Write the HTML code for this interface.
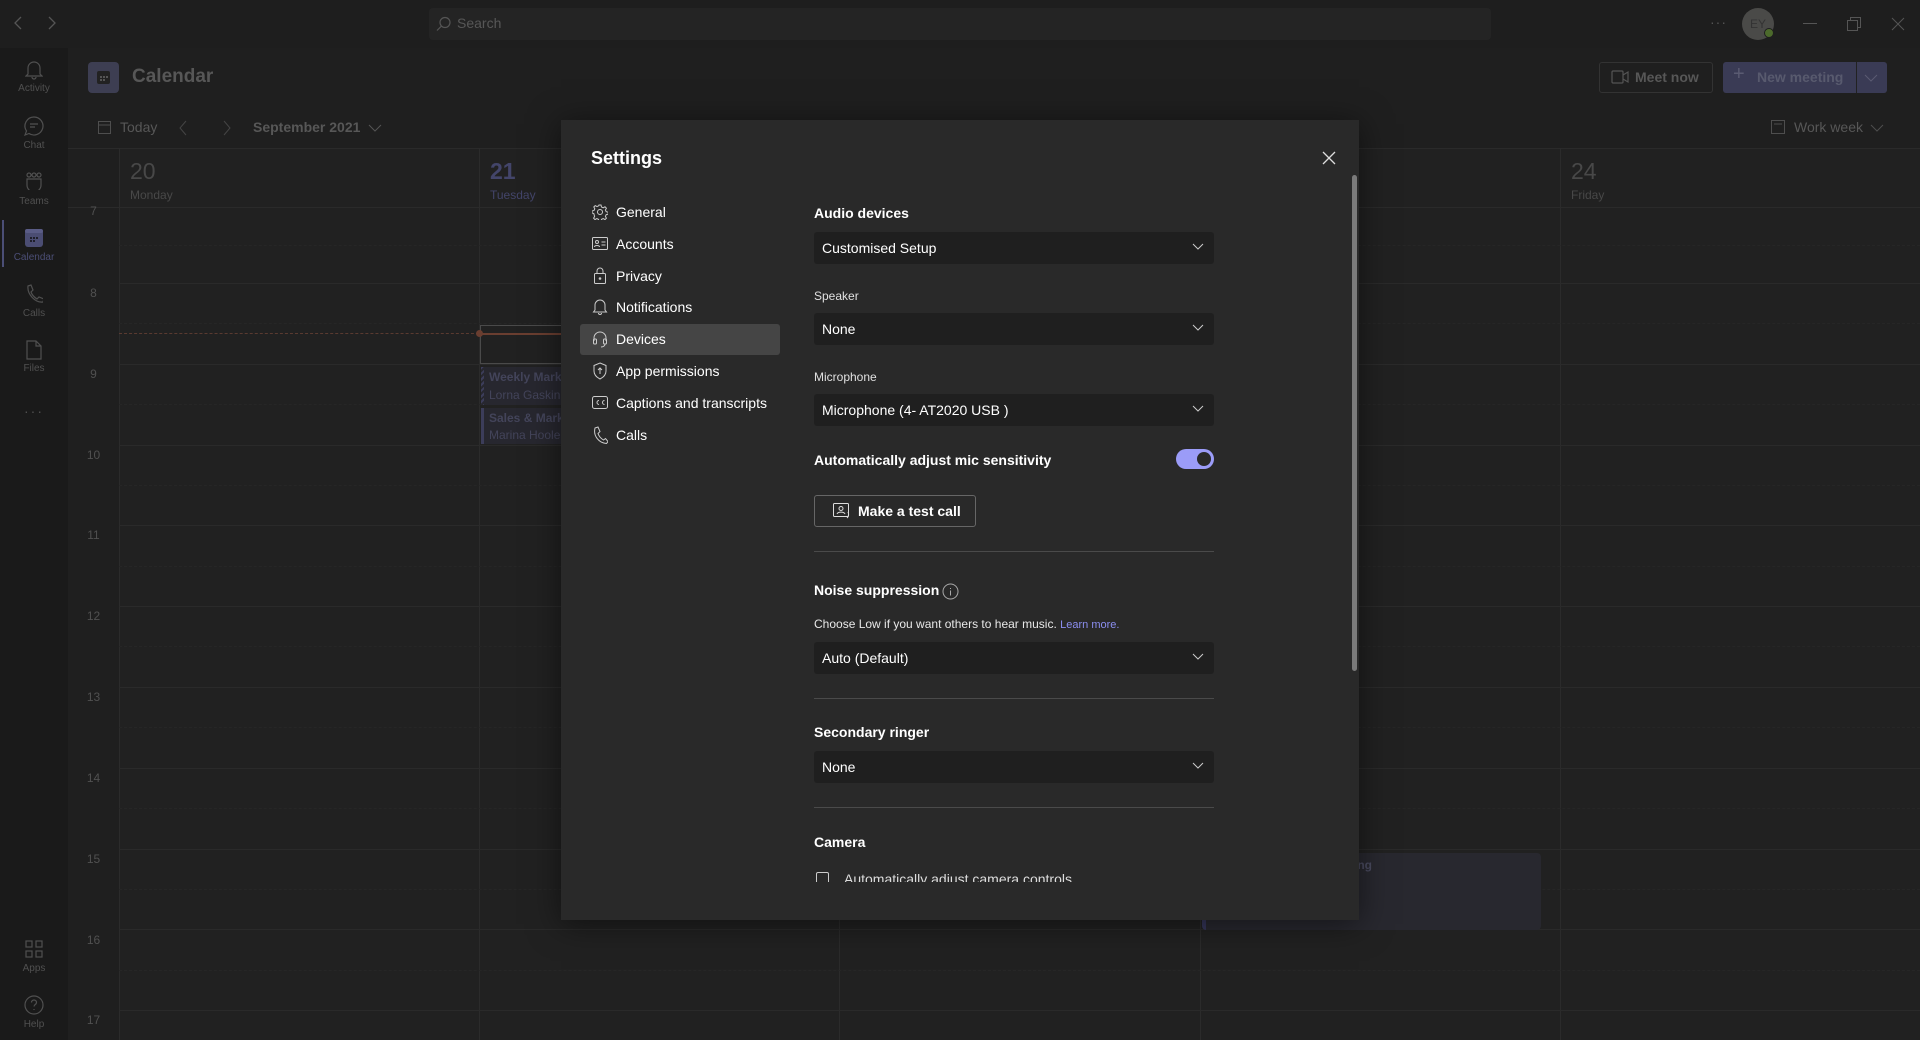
<!DOCTYPE html>
<html><head><meta charset="utf-8"><style>
*{box-sizing:border-box;margin:0;padding:0}
body{width:1920px;height:1040px;background:#1f1f1f;font-family:"Liberation Sans",sans-serif;position:relative;overflow:hidden;color:#fff}
.a{position:absolute}
.dim{color:#575757}
.rl{position:absolute;left:0;width:68px;text-align:center;font-size:10px;color:#505050}
.hl{position:absolute;left:119px;width:1801px;height:1px;background:#2a2a2a}
.hh{position:absolute;left:119px;width:1801px;border-top:1px dashed #262626}
.vl{position:absolute;top:148px;width:1px;height:892px;background:#2b2b2b}
.hr{position:absolute;left:68px;width:51px;text-align:center;font-size:12px;color:#505050}
.nav{position:absolute;left:616px;font-size:14px;color:#fff}
.ni{position:absolute;left:592px}
.dd{position:absolute;left:814px;width:400px;height:32px;background:#1f1f1f;border-radius:3px;font-size:14px;line-height:32px;padding-left:8px;color:#fff}
.dd svg{position:absolute;right:10px;top:11px}
.lb{position:absolute;left:814px;font-size:12px;color:#e0e0e0}
.h{position:absolute;left:814px;font-size:14px;font-weight:bold;color:#fff}
.dv{position:absolute;left:814px;width:400px;height:1px;background:#4a4a4a}
</style></head><body>
<div class="a" style="left:0;top:0;width:1920px;height:48px;background:#1e1e1e"></div>
<svg class="a" style="left:12px;top:15px" width="46" height="16" fill="none" stroke="#555" stroke-width="1.3"><path d="M9 2L3 8l6 6M37 2l6 6-6 6"/></svg>
<div class="a" style="left:429px;top:8px;width:1062px;height:32px;background:#242424;border-radius:4px"></div>
<svg class="a" style="left:436px;top:16px" width="16" height="16" fill="none" stroke="#555" stroke-width="1.2"><circle cx="9" cy="6.5" r="5"/><path d="M5.5 10L1 14.5"/></svg>
<div class="a dim" style="left:457px;top:15px;font-size:14px">Search</div>
<div class="a" style="left:1710px;top:14px;font-size:14px;color:#555;letter-spacing:1px">···</div>
<div class="a" style="left:1742px;top:8px;width:32px;height:32px;border-radius:50%;background:#4a4a48;color:#333;font-size:12px;text-align:center;line-height:32px">EY</div>
<div class="a" style="left:1764px;top:28px;width:10px;height:10px;border-radius:50%;background:#4c6a2c;border:1px solid #1e1e1e"></div>
<div class="a" style="left:1803px;top:23px;width:14px;height:1px;background:#555"></div>
<svg class="a" style="left:1846px;top:16px" width="16" height="16" fill="none" stroke="#555"><rect x="1.5" y="4.5" width="10" height="10"/><path d="M4.5 4.5V1.5h10v10h-3"/></svg>
<svg class="a" style="left:1891px;top:17px" width="14" height="14" stroke="#555"><path d="M1 1l12 12M13 1L1 13"/></svg>
<div class="a" style="left:0;top:48px;width:68px;height:992px;background:#1a1a1a"></div>
<svg class="a" style="left:25px;top:60px" width="18" height="20" fill="none" stroke="#505050" stroke-width="1.2"><path d="M3 14V8a6 6 0 0112 0v6l2 2H1zM7 17a2 2 0 004 0"/></svg>
<div class="rl" style="top:83px">Activity</div>
<svg class="a" style="left:24px;top:116px" width="20" height="20" fill="none" stroke="#505050" stroke-width="1.2"><path d="M10 1a9 9 0 11-5 16.5L1 19l1.5-4A9 9 0 0110 1zM6 8h8M6 11h5"/></svg>
<div class="rl" style="top:140px">Chat</div>
<svg class="a" style="left:24px;top:172px" width="20" height="18" fill="none" stroke="#505050" stroke-width="1.2"><circle cx="5" cy="3" r="2"/><circle cx="10" cy="3" r="2"/><circle cx="15" cy="3" r="2"/><path d="M3 7h14v6a5 5 0 01-14 0z"/></svg>
<div class="rl" style="top:196px">Teams</div>
<div class="a" style="left:2px;top:220px;width:2px;height:47px;background:#4b4e76"></div>
<svg class="a" style="left:25px;top:229px" width="18" height="18"><rect width="18" height="18" rx="3" fill="#4b4d73"/><rect y="0" width="18" height="4" rx="2" fill="#5a5c86"/><g fill="#1f1f2a"><rect x="5" y="8" width="2" height="2"/><rect x="8" y="8" width="2" height="2"/><rect x="11" y="8" width="2" height="2"/><rect x="5" y="11" width="2" height="2"/><rect x="8" y="11" width="2" height="2"/></g></svg>
<div class="rl" style="top:252px;color:#4b4e76">Calendar</div>
<svg class="a" style="left:25px;top:284px" width="18" height="20" fill="none" stroke="#505050" stroke-width="1.2"><path d="M3 2l3-1 2 5-2 2c1 3 3 5 6 7l2-2 5 2-1 3c-8 1-16-8-15-16z"/></svg>
<div class="rl" style="top:308px">Calls</div>
<svg class="a" style="left:26px;top:340px" width="16" height="20" fill="none" stroke="#505050" stroke-width="1.2"><path d="M1 1h9l5 5v13H1zM10 1v5h5"/></svg>
<div class="rl" style="top:363px">Files</div>
<div class="rl" style="top:403px;font-size:14px;letter-spacing:2px">···</div>
<svg class="a" style="left:25px;top:940px" width="18" height="18" fill="none" stroke="#505050" stroke-width="1.2"><rect x="1" y="1" width="6" height="6"/><rect x="11" y="1" width="6" height="6"/><rect x="1" y="11" width="6" height="6"/><rect x="11" y="11" width="6" height="6"/></svg>
<div class="rl" style="top:963px">Apps</div>
<svg class="a" style="left:24px;top:995px" width="20" height="20" fill="none" stroke="#505050" stroke-width="1.2"><circle cx="10" cy="10" r="9"/><path d="M7.5 7.5a2.5 2.5 0 115 0c0 2-2.5 2-2.5 4M10 14v1"/></svg>
<div class="rl" style="top:1019px">Help</div>
<div class="a" style="left:88px;top:62px;width:31px;height:31px;border-radius:4px;background:#3d3e52"></div>
<svg class="a" style="left:97px;top:71px" width="13" height="13"><rect width="13" height="13" rx="2" fill="#222"/><g fill="#555"><rect x="3" y="5" width="2" height="2"/><rect x="6" y="5" width="2" height="2"/><rect x="9" y="5" width="2" height="2"/><rect x="3" y="8" width="2" height="2"/><rect x="6" y="8" width="2" height="2"/></g></svg>
<div class="a" style="left:132px;top:66px;font-size:19px;font-weight:bold;color:#575757">Calendar</div>
<div class="a" style="left:1599px;top:62px;width:114px;height:31px;border:1px solid #333;border-radius:3px"></div>
<svg class="a" style="left:1611px;top:70px" width="18" height="14" fill="none" stroke="#555" stroke-width="1.2"><rect x="1" y="1" width="11" height="12" rx="1"/><path d="M12 5l5-3v10l-5-3"/></svg>
<div class="a" style="left:1635px;top:69px;font-size:14px;font-weight:bold;color:#575757">Meet now</div>
<div class="a" style="left:1723px;top:62px;width:164px;height:31px;background:#3a3b55;border-radius:3px"></div>
<div class="a" style="left:1856px;top:62px;width:1px;height:31px;background:#222"></div>
<div class="a" style="left:1733px;top:63px;font-size:20px;color:#5a5b72">+</div>
<div class="a" style="left:1757px;top:69px;font-size:14px;font-weight:bold;color:#585a6e">New meeting</div>
<svg class="a" style="left:1864px;top:74px" width="14" height="8" fill="none" stroke="#5a5b72"><path d="M1 1l6 6 6-6"/></svg>
<svg class="a" style="left:98px;top:121px" width="13" height="13" fill="none" stroke="#4e4e4e"><rect x=".5" y=".5" width="12" height="12"/><path d="M.5 4h12"/></svg>
<div class="a dim" style="left:120px;top:119px;font-size:14px">Today</div>
<svg class="a" style="left:178px;top:120px" width="60" height="16" fill="none" stroke="#444"><path d="M8 1L2 8l6 7M46 1l6 7-6 7"/></svg>
<div class="a" style="left:253px;top:119px;font-size:14px;font-weight:bold;color:#575757">September 2021</div>
<svg class="a" style="left:368px;top:124px" width="14" height="8" fill="none" stroke="#555"><path d="M1 1l6 6 6-6"/></svg>
<svg class="a" style="left:1771px;top:120px" width="14" height="14" fill="none" stroke="#4e4e4e"><rect x=".5" y=".5" width="13" height="13"/><path d="M3 4h8"/></svg>
<div class="a dim" style="left:1794px;top:119px;font-size:14px">Work week</div>
<svg class="a" style="left:1870px;top:124px" width="14" height="8" fill="none" stroke="#4e4e4e"><path d="M1 1l6 6 6-6"/></svg>
<div class="a" style="left:119px;top:148px;width:1801px;height:892px;background:#212121"></div>
<div class="a" style="left:68px;top:148px;width:1852px;height:1px;background:#2a2a2a"></div>
<div class="a" style="left:68px;top:207px;width:1852px;height:1px;background:#2a2a2a"></div>
<div class="vl" style="left:119px"></div><div class="vl" style="left:479px"></div><div class="vl" style="left:839px"></div><div class="vl" style="left:1200px"></div><div class="vl" style="left:1560px"></div>
<div class="a" style="left:130px;top:158px;font-size:23px;color:#484848">20</div>
<div class="a" style="left:130px;top:188px;font-size:12px;color:#484848">Monday</div>
<div class="a" style="left:490px;top:158px;font-size:23px;font-weight:bold;color:#43456a">21</div>
<div class="a" style="left:490px;top:188px;font-size:12px;color:#43456a">Tuesday</div>
<div class="a" style="left:1571px;top:158px;font-size:23px;color:#484848">24</div>
<div class="a" style="left:1571px;top:188px;font-size:12px;color:#484848">Friday</div>
<div class="hh" style="top:245px"></div>
<div class="hl" style="top:283px"></div><div class="hh" style="top:323px"></div>
<div class="hl" style="top:364px"></div><div class="hh" style="top:404px"></div>
<div class="hl" style="top:445px"></div><div class="hh" style="top:485px"></div>
<div class="hl" style="top:525px"></div><div class="hh" style="top:566px"></div>
<div class="hl" style="top:606px"></div><div class="hh" style="top:646px"></div>
<div class="hl" style="top:687px"></div><div class="hh" style="top:727px"></div>
<div class="hl" style="top:768px"></div><div class="hh" style="top:808px"></div>
<div class="hl" style="top:849px"></div><div class="hh" style="top:889px"></div>
<div class="hl" style="top:929px"></div><div class="hh" style="top:970px"></div>
<div class="hl" style="top:1010px"></div>
<div class="hr" style="top:204px">7</div><div class="hr" style="top:286px">8</div><div class="hr" style="top:367px">9</div><div class="hr" style="top:448px">10</div><div class="hr" style="top:528px">11</div><div class="hr" style="top:609px">12</div><div class="hr" style="top:690px">13</div><div class="hr" style="top:771px">14</div><div class="hr" style="top:852px">15</div><div class="hr" style="top:933px">16</div><div class="hr" style="top:1013px">17</div>
<div class="a" style="left:119px;top:333px;width:360px;border-top:1px dashed #5a3a30"></div>
<div class="a" style="left:480px;top:325px;width:81px;height:39px;border:1px solid #4a4a4a;border-right:none"></div>
<div class="a" style="left:480px;top:333px;width:81px;height:2px;background:#6a3e30"></div>
<div class="a" style="left:476px;top:330px;width:7px;height:7px;border-radius:50%;background:#6a3e30"></div>
<div class="a" style="left:481px;top:367px;width:80px;height:38px;background:#27272f"></div>
<div class="a" style="left:481px;top:367px;width:3px;height:38px;background:repeating-linear-gradient(135deg,#3c3d5a 0 2px,#27272f 2px 4px)"></div>
<div class="a" style="left:489px;top:370px;font-size:12px;font-weight:bold;color:#43445a;white-space:nowrap;width:72px;overflow:hidden">Weekly Mark</div>
<div class="a" style="left:489px;top:388px;font-size:12px;color:#43445a;white-space:nowrap;width:72px;overflow:hidden">Lorna Gaskin</div>
<div class="a" style="left:481px;top:408px;width:80px;height:36px;background:#27272f;border-left:3px solid #3c3d5a"></div>
<div class="a" style="left:489px;top:411px;font-size:12px;font-weight:bold;color:#43445a;white-space:nowrap;width:72px;overflow:hidden">Sales &amp; Mark</div>
<div class="a" style="left:489px;top:428px;font-size:12px;color:#43445a;white-space:nowrap;width:72px;overflow:hidden">Marina Hoole</div>
<div class="a" style="left:1202px;top:853px;width:339px;height:77px;background:#28282f;border-radius:4px;border-left:4px solid #35365a"></div>
<div class="a" style="left:1350px;top:858px;font-size:12px;font-weight:bold;color:#4a4b60">ting</div>
<div class="a" style="left:561px;top:120px;width:798px;height:800px;background:#292929;box-shadow:0 4px 30px rgba(0,0,0,.5)"></div>
<div class="a" style="left:591px;top:148px;font-size:18px;font-weight:bold">Settings</div>
<svg class="a" style="left:1322px;top:151px" width="14" height="14" stroke="#ddd" stroke-width="1.3"><path d="M1 1l12 12M13 1L1 13"/></svg>
<div class="a" style="left:1352px;top:175px;width:5px;height:496px;background:#7a7a7a;border-radius:3px"></div>
<div class="a" style="left:580px;top:324px;width:200px;height:31px;background:#454545;border-radius:3px"></div>
<svg class="ni" style="top:204px" width="16" height="16" fill="none" stroke="#ccc" stroke-width="1"><circle cx="8" cy="8" r="2.5"/><path d="M7 1h2l.5 2 1.7.8 1.8-1 1.4 1.4-1 1.8.8 1.7 2 .5v2l-2 .5-.8 1.7 1 1.8-1.4 1.4-1.8-1-1.7.8-.5 2H7l-.5-2-1.7-.8-1.8 1-1.4-1.4 1-1.8L1.8 9.5 0 9V7l2-.5.8-1.7-1-1.8 1.4-1.4 1.8 1 1.7-.8z"/></svg>
<div class="nav" style="top:204px">General</div>
<svg class="ni" style="top:237px" width="16" height="14" fill="none" stroke="#ccc"><rect x=".5" y=".5" width="15" height="12" rx="1"/><circle cx="5" cy="5" r="1.5"/><path d="M2.5 10c0-2 5-2 5 0M9.5 5h4M9.5 8h4"/></svg>
<div class="nav" style="top:236px">Accounts</div>
<svg class="ni" style="top:266px" width="16" height="18" fill="none" stroke="#ccc"><rect x="2.5" y="7.5" width="11" height="10" rx="1"/><path d="M5 7.5V5a3 3 0 016 0v2.5"/><circle cx="8" cy="12.5" r=".8" fill="#ccc"/></svg>
<div class="nav" style="top:268px">Privacy</div>
<svg class="ni" style="top:298px" width="16" height="18" fill="none" stroke="#ccc"><path d="M3 12V7a5 5 0 0110 0v5l1.5 2h-13zM6.5 15a1.5 1.5 0 003 0"/></svg>
<div class="nav" style="top:299px">Notifications</div>
<svg class="ni" style="top:330px" width="16" height="18" fill="none" stroke="#ccc"><path d="M2 11V8a6 6 0 0112 0v3"/><rect x="1.5" y="9" width="3" height="5" rx="1"/><rect x="11.5" y="9" width="3" height="5" rx="1"/><path d="M13 14c0 2-2 3-4 3"/></svg>
<div class="nav" style="top:331px">Devices</div>
<svg class="ni" style="top:362px" width="16" height="18" fill="none" stroke="#ccc"><path d="M8 1l6 2.5V9c0 4-3 6.5-6 8-3-1.5-6-4-6-8V3.5z"/><path d="M8 12V6M6 8l2-2 2 2"/></svg>
<div class="nav" style="top:363px">App permissions</div>
<svg class="ni" style="top:396px" width="16" height="13" fill="none" stroke="#ccc"><rect x=".5" y=".5" width="15" height="12" rx="2"/><path d="M7 4.5a2 2 0 100 4M12.5 4.5a2 2 0 100 4"/></svg>
<div class="nav" style="top:395px">Captions and transcripts</div>
<svg class="ni" style="top:426px" width="16" height="18" fill="none" stroke="#ccc"><path d="M3 2l3-1 2 4.5-2 2c1 3 3 5 5.5 6.5l2-1.5 2.5 3-1.5 2C7 17 1 10 3 2z"/></svg>
<div class="nav" style="top:427px">Calls</div>
<div class="h" style="top:205px">Audio devices</div>
<div class="dd" style="top:232px">Customised Setup<svg width="12" height="7" fill="none" stroke="#ccc"><path d="M1 1l5 5 5-5"/></svg></div>
<div class="lb" style="top:289px">Speaker</div>
<div class="dd" style="top:313px">None<svg width="12" height="7" fill="none" stroke="#ccc"><path d="M1 1l5 5 5-5"/></svg></div>
<div class="lb" style="top:370px">Microphone</div>
<div class="dd" style="top:394px">Microphone (4- AT2020 USB )<svg width="12" height="7" fill="none" stroke="#ccc"><path d="M1 1l5 5 5-5"/></svg></div>
<div class="h" style="top:452px">Automatically adjust mic sensitivity</div>
<div class="a" style="left:1176px;top:449px;width:38px;height:20px;border-radius:10px;background:#9b9cf8"></div>
<div class="a" style="left:1197px;top:452px;width:14px;height:14px;border-radius:50%;background:#292929"></div>
<div class="a" style="left:814px;top:495px;width:162px;height:32px;border:1px solid #666;border-radius:3px"></div>
<svg class="a" style="left:833px;top:503px" width="18" height="16" fill="none" stroke="#ddd"><rect x=".5" y=".5" width="15" height="13" rx="1"/><circle cx="8" cy="5.5" r="2"/><path d="M4 11c1-2.5 7-2.5 8 0M15 9c1 2 1 4-1 6"/></svg>
<div class="a" style="left:858px;top:503px;font-size:14px;font-weight:bold">Make a test call</div>
<div class="dv" style="top:551px"></div>
<div class="h" style="top:582px">Noise suppression</div>
<svg class="a" style="left:942px;top:583px" width="17" height="17" fill="none" stroke="#aaa"><circle cx="8.5" cy="8.5" r="7.5"/><path d="M8.5 7.5v5M8.5 5v1"/></svg>
<div class="lb" style="top:617px;color:#e8e8e8">Choose Low if you want others to hear music. <span style="color:#8b8ef0;font-size:11px">Learn more.</span></div>
<div class="dd" style="top:642px">Auto (Default)<svg width="12" height="7" fill="none" stroke="#ccc"><path d="M1 1l5 5 5-5"/></svg></div>
<div class="dv" style="top:698px"></div>
<div class="h" style="top:724px">Secondary ringer</div>
<div class="dd" style="top:751px">None<svg width="12" height="7" fill="none" stroke="#ccc"><path d="M1 1l5 5 5-5"/></svg></div>
<div class="dv" style="top:807px"></div>
<div class="h" style="top:834px">Camera</div>
<div class="a" style="left:814px;top:870px;width:400px;height:12px;overflow:hidden">
<div class="a" style="left:2px;top:2px;width:13px;height:13px;border:1px solid #ccc;border-radius:2px"></div>
<div class="a" style="left:30px;top:1px;font-size:14px;color:#ddd;white-space:nowrap">Automatically adjust camera controls</div>
</div>
</body></html>
